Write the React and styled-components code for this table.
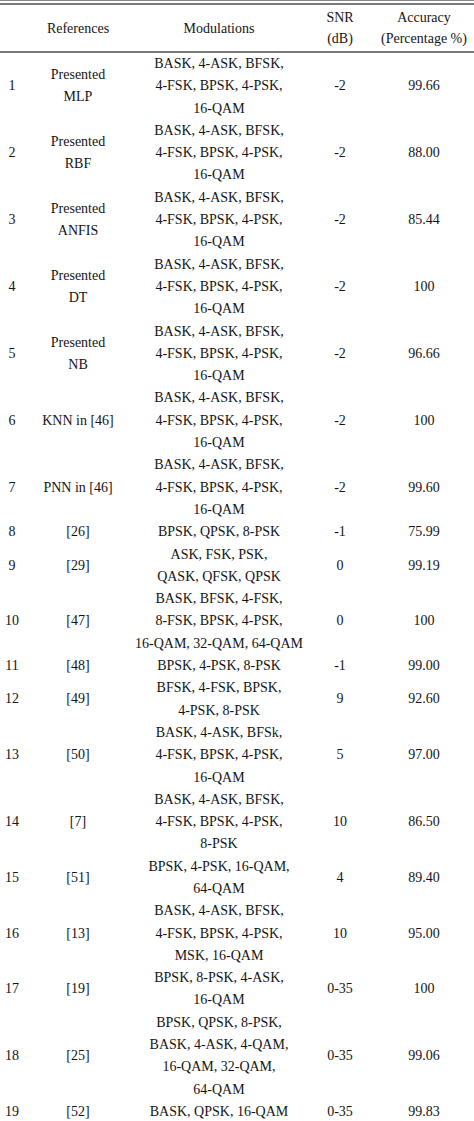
import styled, { createGlobalStyle } from "styled-components";

const GlobalStyle = createGlobalStyle`
  html, body {
    margin: 0;
    padding: 0;
    background: #ffffff;
  }
`;

const rows = [
  { id: 1, ref: ["Presented", "MLP"], mods: ["BASK, 4-ASK, BFSK,", "4-FSK, BPSK, 4-PSK,", "16-QAM"], snr: "-2", acc: "99.66" },
  { id: 2, ref: ["Presented", "RBF"], mods: ["BASK, 4-ASK, BFSK,", "4-FSK, BPSK, 4-PSK,", "16-QAM"], snr: "-2", acc: "88.00" },
  { id: 3, ref: ["Presented", "ANFIS"], mods: ["BASK, 4-ASK, BFSK,", "4-FSK, BPSK, 4-PSK,", "16-QAM"], snr: "-2", acc: "85.44" },
  { id: 4, ref: ["Presented", "DT"], mods: ["BASK, 4-ASK, BFSK,", "4-FSK, BPSK, 4-PSK,", "16-QAM"], snr: "-2", acc: "100" },
  { id: 5, ref: ["Presented", "NB"], mods: ["BASK, 4-ASK, BFSK,", "4-FSK, BPSK, 4-PSK,", "16-QAM"], snr: "-2", acc: "96.66" },
  { id: 6, ref: ["KNN in [46]"], mods: ["BASK, 4-ASK, BFSK,", "4-FSK, BPSK, 4-PSK,", "16-QAM"], snr: "-2", acc: "100" },
  { id: 7, ref: ["PNN in [46]"], mods: ["BASK, 4-ASK, BFSK,", "4-FSK, BPSK, 4-PSK,", "16-QAM"], snr: "-2", acc: "99.60" },
  { id: 8, ref: ["[26]"], mods: ["BPSK, QPSK, 8-PSK"], snr: "-1", acc: "75.99" },
  { id: 9, ref: ["[29]"], mods: ["ASK, FSK, PSK,", "QASK, QFSK, QPSK"], snr: "0", acc: "99.19" },
  { id: 10, ref: ["[47]"], mods: ["BASK, BFSK, 4-FSK,", "8-FSK, BPSK, 4-PSK,", "16-QAM, 32-QAM, 64-QAM"], snr: "0", acc: "100" },
  { id: 11, ref: ["[48]"], mods: ["BPSK, 4-PSK, 8-PSK"], snr: "-1", acc: "99.00" },
  { id: 12, ref: ["[49]"], mods: ["BFSK, 4-FSK, BPSK,", "4-PSK, 8-PSK"], snr: "9", acc: "92.60" },
  { id: 13, ref: ["[50]"], mods: ["BASK, 4-ASK, BFSk,", "4-FSK, BPSK, 4-PSK,", "16-QAM"], snr: "5", acc: "97.00" },
  { id: 14, ref: ["[7]"], mods: ["BASK, 4-ASK, BFSK,", "4-FSK, BPSK, 4-PSK,", "8-PSK"], snr: "10", acc: "86.50" },
  { id: 15, ref: ["[51]"], mods: ["BPSK, 4-PSK, 16-QAM,", "64-QAM"], snr: "4", acc: "89.40" },
  { id: 16, ref: ["[13]"], mods: ["BASK, 4-ASK, BFSK,", "4-FSK, BPSK, 4-PSK,", "MSK, 16-QAM"], snr: "10", acc: "95.00" },
  { id: 17, ref: ["[19]"], mods: ["BPSK, 8-PSK, 4-ASK,", "16-QAM"], snr: "0-35", acc: "100" },
  { id: 18, ref: ["[25]"], mods: ["BPSK, QPSK, 8-PSK,", "BASK, 4-ASK, 4-QAM,", "16-QAM, 32-QAM,", "64-QAM"], snr: "0-35", acc: "99.06" },
  { id: 19, ref: ["[52]"], mods: ["BASK, QPSK, 16-QAM"], snr: "0-35", acc: "99.83" },
];

function Lines({ items }) {
  return items.map((line, i) => (
    <span key={i}>
      {line}
      {i < items.length - 1 && <br />}
    </span>
  ));
}

export default function App() {
  return (
    <>
      <GlobalStyle />
      <Page>
        <Table>
          <colgroup>
            <col style={{ width: 24 }} />
            <col style={{ width: 108 }} />
            <col style={{ width: 174 }} />
            <col style={{ width: 68 }} />
            <col style={{ width: 100 }} />
          </colgroup>
          <thead>
            <tr>
              <HeadCell />
              <HeadCell>References</HeadCell>
              <HeadCell>Modulations</HeadCell>
              <HeadCell>
                SNR
                <br />
                (dB)
              </HeadCell>
              <HeadCell>
                Accuracy
                <br />
                (Percentage %)
              </HeadCell>
            </tr>
          </thead>
          <tbody>
            {rows.map((row) => (
              <tr key={row.id}>
                <Cell>{row.id}</Cell>
                <Cell>
                  <Lines items={row.ref} />
                </Cell>
                <Cell>
                  <Lines items={row.mods} />
                </Cell>
                <Cell>{row.snr}</Cell>
                <Cell>{row.acc}</Cell>
              </tr>
            ))}
          </tbody>
        </Table>
      </Page>
    </>
  );
}

const Page = styled.div`
  width: 474px;
  height: 1121px;
  overflow: hidden;
  border-top: 1px solid #8a8a8a;
  padding-top: 2px;
  box-sizing: border-box;
  font-family: "Liberation Serif", "Times New Roman", serif;
  color: #141414;
`;

const Table = styled.table`
  width: 474px;
  table-layout: fixed;
  border-collapse: collapse;
  border-top: 2px solid #7a7a7a;
`;

const HeadCell = styled.th`
  font-weight: normal;
  font-size: 14px;
  line-height: 21px;
  padding: 2px 0 2px;
  height: 40px;
  text-align: center;
  vertical-align: middle;
  border-bottom: 2px solid #7a7a7a;
  white-space: nowrap;
`;

const Cell = styled.td`
  font-size: 14px;
  line-height: 22.3px;
  padding: 0;
  text-align: center;
  vertical-align: middle;
  white-space: nowrap;
`;
